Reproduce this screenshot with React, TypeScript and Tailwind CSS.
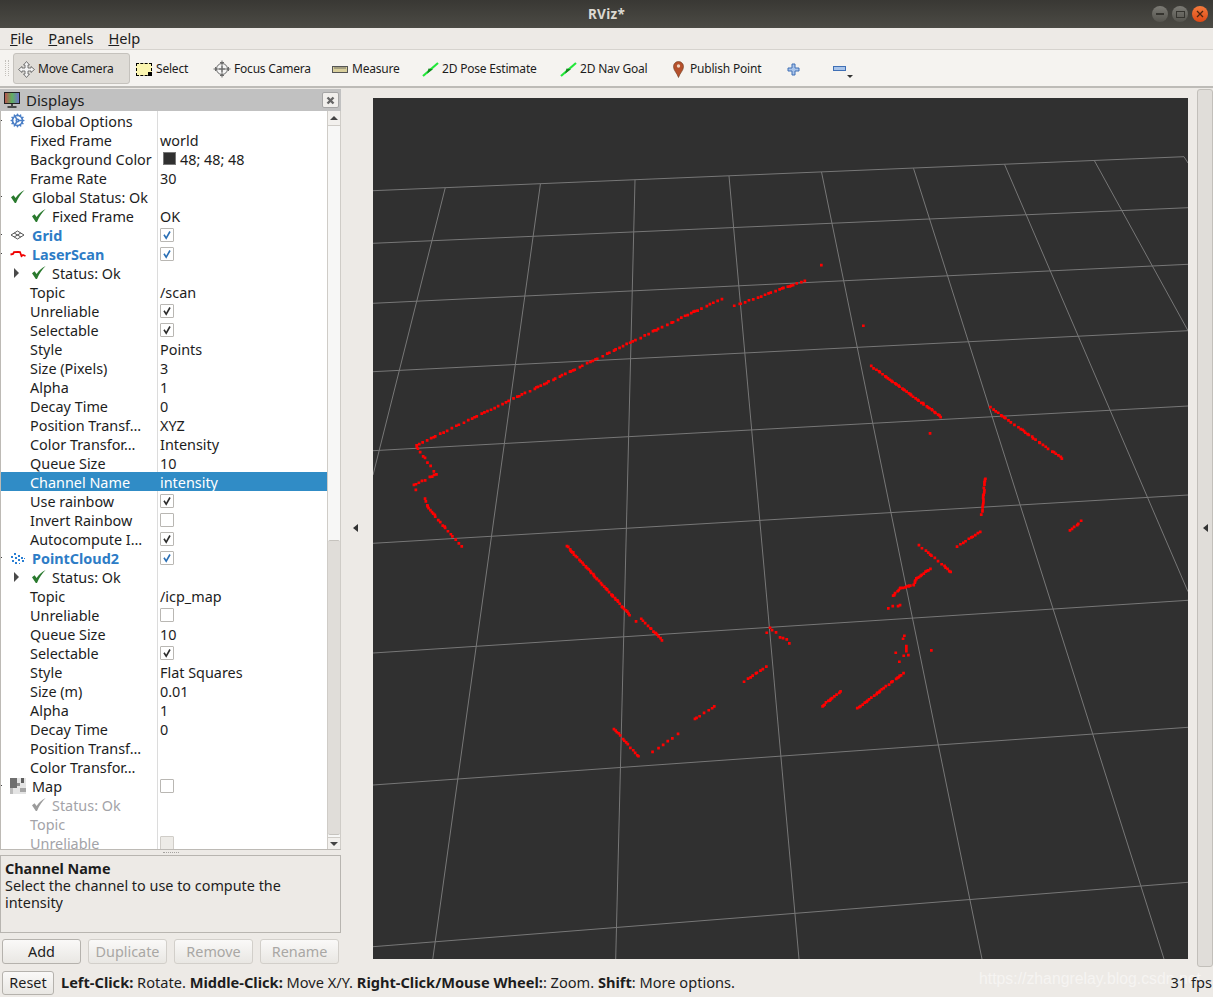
import React from 'react';
import { Cog } from 'lucide-react';

type Row = {
  label: string;
  value?: string;
  swatch?: boolean;
  check?: 'on' | 'off' | 'blue' | 'dim';
  icon?: 'gear' | 'ok' | 'grid' | 'laser' | 'cloud' | 'map';
  status?: boolean;
  arrow?: boolean;
  bold?: boolean;
  off?: boolean;
  selected?: boolean;
};

const rows: Row[] = [
  { label: 'Global Options', icon: 'gear' },
  { label: 'Fixed Frame', value: 'world' },
  { label: 'Background Color', value: '48; 48; 48', swatch: true },
  { label: 'Frame Rate', value: '30' },
  { label: 'Global Status: Ok', icon: 'ok' },
  { label: 'Fixed Frame', value: 'OK', status: true },
  { label: 'Grid', icon: 'grid', bold: true, check: 'blue' },
  { label: 'LaserScan', icon: 'laser', bold: true, check: 'blue' },
  { label: 'Status: Ok', status: true, arrow: true },
  { label: 'Topic', value: '/scan' },
  { label: 'Unreliable', check: 'on' },
  { label: 'Selectable', check: 'on' },
  { label: 'Style', value: 'Points' },
  { label: 'Size (Pixels)', value: '3' },
  { label: 'Alpha', value: '1' },
  { label: 'Decay Time', value: '0' },
  { label: 'Position Transf…', value: 'XYZ' },
  { label: 'Color Transfor…', value: 'Intensity' },
  { label: 'Queue Size', value: '10' },
  { label: 'Channel Name', value: 'intensity', selected: true },
  { label: 'Use rainbow', check: 'on' },
  { label: 'Invert Rainbow', check: 'off' },
  { label: 'Autocompute I…', check: 'on' },
  { label: 'PointCloud2', icon: 'cloud', bold: true, check: 'blue' },
  { label: 'Status: Ok', status: true, arrow: true },
  { label: 'Topic', value: '/icp_map' },
  { label: 'Unreliable', check: 'off' },
  { label: 'Queue Size', value: '10' },
  { label: 'Selectable', check: 'on' },
  { label: 'Style', value: 'Flat Squares' },
  { label: 'Size (m)', value: '0.01' },
  { label: 'Alpha', value: '1' },
  { label: 'Decay Time', value: '0' },
  { label: 'Position Transf…' },
  { label: 'Color Transfor…' },
  { label: 'Map', icon: 'map', check: 'off' },
  { label: 'Status: Ok', status: true, off: true },
  { label: 'Topic', off: true },
  { label: 'Unreliable', off: true, check: 'dim' },
];

// grid lines in page coordinates, read off the 3d view
const gridLines = [
  [373, 190.7, 1184, 156.7],
  [373, 243.3, 1188, 207.7],
  [373, 303.3, 1188, 264.3],
  [373, 371.7, 1188, 330.7],
  [373, 450.7, 1188, 406],
  [373, 543.3, 1188, 495],
  [373, 653, 1188, 600.3],
  [373, 785, 1188, 727.3],
  [373, 946.7, 1188, 882.3],
  [1184, 156.7, 1188, 163],
  [1094.4, 160.7, 1188, 330.7],
  [1004.5, 164.3, 1188, 591.7],
  [913.5, 168.3, 1164, 959],
  [821.5, 172, 982, 959],
  [729, 176, 799, 959],
  [635, 180, 615.7, 959],
  [540.4, 184, 432.8, 959],
  [445.2, 188, 373, 475],
];

// laser returns: polylines with a dot spacing
const scanLines: { pts: number[]; step: number }[] = [
  { pts: [417, 445, 725, 297], step: 3.6 },
  { pts: [734.3, 305.7, 806.7, 280], step: 3.4 },
  { pts: [416.7, 447.3, 436, 474, 414.3, 485.3, 416.7, 492.3], step: 4 },
  { pts: [425, 498.3, 427.3, 506.7, 461.7, 546.7], step: 3.2 },
  { pts: [871, 366, 943.3, 418.3], step: 2.4 },
  { pts: [990, 407.3, 1062.7, 458.7], step: 3 },
  { pts: [985, 478.7, 982.7, 506.7, 981, 516.7], step: 2 },
  { pts: [980, 531.7, 956.7, 546.7], step: 2.6 },
  { pts: [1070, 530.7, 1082.7, 520], step: 3.6 },
  { pts: [919.3, 545.3, 951.7, 572.7], step: 3.2 },
  { pts: [930, 568.7, 916.7, 578.3, 913.3, 585, 900, 588.3, 892.7, 596.7], step: 2 },
  { pts: [566.7, 546, 631.7, 616.7], step: 2 },
  { pts: [641, 618.7, 664, 641.7], step: 2.4 },
  { pts: [744, 681.3, 766.7, 666.3], step: 2.8 },
  { pts: [695, 719, 715.3, 706], step: 4 },
  { pts: [652.3, 752.3, 680.7, 732.3], step: 5.8 },
  { pts: [614, 728.7, 640.7, 759], step: 3 },
  { pts: [822.3, 706, 842, 690.3], step: 2.2 },
  { pts: [857.3, 708.3, 903.3, 673.3], step: 2.2 },
];

const scanDots = [
  [821.3, 265], [863.3, 325.7], [930, 433.3], [888.3, 608.3], [892.7, 606], [900, 605], [898, 606],
  [636, 621.3], [770, 627.7], [766.7, 632.7], [776, 632.3], [780, 637.3], [786.7, 639.3], [789.3, 643.3],
  [772, 630], [783, 638], [904.3, 635.7], [903, 638.7], [906.3, 646], [906.3, 648.5], [906.3, 651],
  [895.7, 652.7], [903.7, 655.7], [908.3, 655], [899.3, 661.7], [931.3, 650.3],
];

function buildScanPath() {
  let seed = 7;
  const rand = () => {
    seed = (seed * 16807) % 2147483647;
    return seed / 2147483647;
  };
  let d = '';
  const dot = (x: number, y: number) => {
    d += `M${x.toFixed(1)} ${y.toFixed(1)}h2.7v2.7h-2.7z`;
  };
  scanLines.forEach(({ pts, step }) => {
    for (let i = 0; i + 3 < pts.length; i += 2) {
      const dx = pts[i + 2] - pts[i];
      const dy = pts[i + 3] - pts[i + 1];
      const len = Math.hypot(dx, dy);
      for (let s = 0; s <= len; s += step * (0.4 + rand() * 1.2)) {
        dot(pts[i] + (dx * s) / len + (rand() - 0.5) * 0.9 - 1.3, pts[i + 1] + (dy * s) / len + (rand() - 0.5) * 0.9 - 1.3);
      }
    }
  });
  scanDots.forEach(([x, y]) => dot(x - 1.3, y - 1.3));
  return d;
}

const scanPath = buildScanPath();

const CheckMark = ({ color = '#2a7a2e' }: { color?: string }) => (
  <svg width="15" height="15" viewBox="0 0 15 15" className="shrink-0">
    <path d="M1 8.2 L3.6 6.2 L5.6 9 C7.6 6 10.2 3 14.6 1 C11 4.5 8.4 8.4 6 14 L4.8 14 Z" fill={color} />
  </svg>
);

const RowIcon = ({ icon }: { icon: Row['icon'] }) => {
  if (icon === 'gear') return <Cog size={15} strokeWidth={2.6} color="#4b7fc6" />;
  if (icon === 'ok') return <CheckMark />;
  if (icon === 'grid')
    return (
      <svg width="15" height="10" viewBox="0 0 15 10">
        <path d="M1 5 L7.5 1 L14 5 L7.5 9 Z M4.2 3 L10.8 7 M10.8 3 L4.2 7" fill="none" stroke="#555" strokeWidth="1" />
      </svg>
    );
  if (icon === 'laser')
    return (
      <svg width="16" height="10" viewBox="0 0 16 10">
        <path d="M0.5 5.5 L3 5 L4 3.2 L8 2.8 L10 3 L11.5 7 L13 6 L15.5 7" fill="none" stroke="#f00000" strokeWidth="1.8" />
      </svg>
    );
  if (icon === 'cloud')
    return (
      <svg width="16" height="16" viewBox="0 0 16 16" fill="#2a7fd4">
        <rect x="1" y="6" width="2" height="2" />
        <rect x="2" y="10" width="2" height="2" />
        <rect x="4" y="3" width="2" height="2" />
        <rect x="5" y="7" width="2" height="2" />
        <rect x="5" y="12" width="2" height="2" />
        <rect x="8" y="5" width="2" height="2" />
        <rect x="8" y="9" width="2" height="2" />
        <rect x="9" y="13" width="1" height="1" />
        <rect x="11" y="7" width="2" height="2" />
        <rect x="12" y="10" width="2" height="2" />
        <rect x="14" y="8" width="1" height="1" />
      </svg>
    );
  if (icon === 'map')
    return (
      <svg width="16" height="16" viewBox="0 0 16 16">
        <rect width="16" height="16" fill="#e4e4e4" />
        <rect width="7" height="10" fill="#6f6f6f" />
        <rect x="7" y="5" width="3" height="3" fill="#8d8d8d" />
        <rect x="11" width="3" height="5" fill="#5e5e5e" />
        <rect x="0" y="10" width="3" height="6" fill="#bcbcbc" />
        <rect x="10" y="10" width="6" height="4" fill="#a5a5a5" />
      </svg>
    );
  return null;
};

const CheckBox = ({ state }: { state: NonNullable<Row['check']> }) => (
  <span className={`flex h-[14px] w-[14px] items-center justify-center rounded-[1px] border ${state === 'dim' ? 'border-[#d0cdc8] bg-[#edebe7]' : 'border-[#b9b7b3] bg-white'}`}>
    {(state === 'on' || state === 'blue') && (
      <svg width="10" height="10" viewBox="0 0 10 10">
        <path d="M2 4.8 L4.2 8.2 L8 1.5" fill="none" stroke={state === 'blue' ? '#2a6fb5' : '#2c2c2c'} strokeWidth="1.6" />
      </svg>
    )}
  </span>
);

const TreeRow = ({ row }: { row: Row }) => {
  const textColor = row.selected ? 'text-white' : row.off ? 'text-[#a3a3a8]' : row.bold ? 'text-[#2d7cc6] font-bold' : 'text-[#1d1d1d]';
  return (
    <div className={`flex h-[19px] shrink-0 leading-[19px] ${row.selected ? 'bg-[#308cc6]' : ''}`}>
      <div className={`relative flex w-[157px] shrink-0 items-center border-r ${row.selected ? 'border-[#308cc6]' : 'border-[#dcdcdc]'} ${textColor}`}>
        {row.icon && (
          <>
            <span className="absolute left-0 top-[9px] h-px w-px bg-[#444]" />
            <span className="ml-[9px] flex w-[22px] shrink-0 items-center">
              <RowIcon icon={row.icon} />
            </span>
          </>
        )}
        {row.status && (
          <span className="ml-[12px] flex w-[39px] shrink-0 items-center">
            <span className="flex w-[18px] justify-start">
              {row.arrow && <span className="ml-[1px] h-0 w-0 border-y-[5px] border-l-[5px] border-y-transparent border-l-[#4a4a4a]" />}
            </span>
            <CheckMark color={row.off ? '#9c9c9c' : '#2a7a2e'} />
          </span>
        )}
        {!row.icon && !row.status && <span className="w-[29px] shrink-0" />}
        <span className="mt-[2px] whitespace-nowrap">{row.label}</span>
      </div>
      <div className={`flex flex-1 items-center pl-[2px] ${row.selected ? 'text-white' : 'text-[#1d1d1d]'}`}>
        {row.swatch && <span className="ml-[3px] mr-[4px] h-[13px] w-[13px] border border-[#777] bg-[#303030]" />}
        {row.value && <span className="mt-[2px]">{row.value}</span>}
        {row.check && <CheckBox state={row.check} />}
      </div>
    </div>
  );
};

const PoseArrow = () => (
  <svg width="17" height="15" viewBox="0 0 17 15">
    <path d="M1 14 L16 1" stroke="#22e83a" strokeWidth="2.2" />
    <path d="M5 11.8 L6.5 6.5 L11 7.2 Z" fill="#128a1e" />
  </svg>
);

const tools = [
  { label: 'Select', box: 'w-[77px] pl-[6px]', gap: 'w-[20px]', icon: (
    <span className="relative block h-[13px] w-[16px] border border-dashed border-black bg-[#fbf5b0]">
      <span className="absolute bottom-[-1px] right-[-1px] h-[4px] w-[4px] bg-black" />
    </span>
  ) },
  { label: 'Focus Camera', box: 'w-[125px] pl-[6px]', gap: 'w-[21px]', icon: (
    <svg width="18" height="18" viewBox="0 0 18 18" fill="none" stroke="#6a6a6a">
      <circle cx="9" cy="9" r="5.5" fill="#f4f4f4" />
      <path d="M9 0.5 V17.5 M0.5 9 H17.5 M6 9 H12 M9 6 V12" />
      <path d="M7 2.5 H11 M7 15.5 H11 M2.5 7 V11 M15.5 7 V11" />
    </svg>
  ) },
  { label: 'Measure', box: 'w-[90px] pl-[0px]', gap: 'w-[20px]', icon: (
    <svg width="16" height="7" viewBox="0 0 16 7">
      <rect x="0.5" y="0.5" width="15" height="6" fill="#d9cf9c" stroke="#555" />
      <path d="M3 1 V3 M5 1 V3 M7 1 V3 M9 1 V3 M11 1 V3 M13 1 V3" stroke="#555" strokeWidth="0.8" />
    </svg>
  ) },
  { label: '2D Pose Estimate', box: 'w-[138px] pl-[0px]', gap: 'w-[20px]', icon: <PoseArrow /> },
  { label: '2D Nav Goal', box: 'w-[113px] pl-[0px]', gap: 'w-[20px]', icon: <PoseArrow /> },
  { label: 'Publish Point', box: 'w-[114px] pl-[0px]', gap: 'w-[17px]', icon: (
    <svg width="11" height="17" viewBox="0 0 11 17">
      <path d="M5.5 16.5 C4 12 0.5 9.5 0.5 5.5 A5 5 0 0 1 10.5 5.5 C10.5 9.5 7 12 5.5 16.5 Z" fill="#b5502c" stroke="#6d3a20" strokeWidth="0.6" />
      <circle cx="5.5" cy="5" r="1.7" fill="#f0d4c0" />
    </svg>
  ) },
];

const PanelButton = ({ label, disabled }: { label: string; disabled?: boolean }) => (
  <button className={`h-[25px] w-[79px] rounded-[3px] border bg-gradient-to-b from-[#faf9f8] to-[#e9e7e3] text-[14.4px] ${disabled ? 'border-[#d2cfca] text-[#a9a7a4]' : 'border-[#b5b2ad] text-[#1d1d1d]'}`}>
    {label}
  </button>
);

const App: React.FC = () => {
  return (
    <div className="relative flex h-[997px] w-[1213px] flex-col overflow-hidden bg-[#edeae6] text-[14.4px] text-[#1d1d1d]" style={{ fontFamily: '"Noto Sans", sans-serif' }}>
      {/* Title bar */}
      <div className="relative flex h-[28px] shrink-0 items-center justify-center bg-gradient-to-b from-[#393834] to-[#4c4b45]">
        <span className="text-[13.5px] font-bold tracking-[0.3px] text-[#dcd9d2]">RViz*</span>
        <div className="absolute right-[5px] top-[6px] flex gap-[4px]">
          <span className="flex h-[16px] w-[16px] items-center justify-center rounded-full bg-gradient-to-b from-[#7c7b75] to-[#55544e]">
            <span className="h-[1.5px] w-[8px] bg-[#35342f]" />
          </span>
          <span className="flex h-[16px] w-[16px] items-center justify-center rounded-full bg-gradient-to-b from-[#7c7b75] to-[#55544e]">
            <span className="h-[7px] w-[9px] border border-[#35342f]" />
          </span>
          <span className="flex h-[16px] w-[16px] items-center justify-center rounded-full bg-gradient-to-b from-[#f47a3c] to-[#dd4814] text-[#4d2410]">
            <svg width="8" height="8" viewBox="0 0 8 8">
              <path d="M1 1 L7 7 M7 1 L1 7" stroke="currentColor" strokeWidth="1.3" />
            </svg>
          </span>
        </div>
      </div>

      {/* Menu bar */}
      <div className="flex h-[22px] shrink-0 items-center gap-[15px] border-b border-[#d6d3ce] pl-[10px] text-[14.6px]">
        <span><u>F</u>ile</span>
        <span><u>P</u>anels</span>
        <span><u>H</u>elp</span>
      </div>

      {/* Toolbar */}
      <div className="flex h-[38px] shrink-0 items-center border-b-2 border-[#bdbbb7] bg-[#f5f3f0] text-[12px] tracking-[-0.2px]">
        <span className="ml-[5px] h-[16px] w-[4px] border-x border-dotted border-[#c3c0bb]" />
        <div className="ml-[4px] flex h-[31px] w-[117px] items-center rounded-[3px] border border-[#c5c2bd] bg-[#dfdcd7] pl-[4px] pt-[2px]">
          <span className="flex w-[20px] justify-start">
            <svg width="17" height="17" viewBox="0 0 17 17">
              <path d="M8.5 0.5 L11.5 4 H10 V7 H13 V5.5 L16.5 8.5 L13 11.5 V10 H10 V13 H11.5 L8.5 16.5 L5.5 13 H7 V10 H4 V11.5 L0.5 8.5 L4 5.5 V7 H7 V4 H5.5 Z" fill="#f2f2f2" stroke="#666" strokeWidth="0.9" />
            </svg>
          </span>
          Move Camera
        </div>
        {tools.map(t => (
          <div key={t.label} className={`flex items-center pt-[2px] ${t.box}`}>
            <span className={`flex shrink-0 items-center ${t.gap}`}>{t.icon}</span>
            <span className="whitespace-nowrap">{t.label}</span>
          </div>
        ))}
        <span className="w-[46px] pt-[2px]">
          <svg width="13" height="13" viewBox="0 0 13 13" className="block">
            <path d="M5 1 H8 V5 H12 V8 H8 V12 H5 V8 H1 V5 H5 Z" fill="#a9c4ea" stroke="#3f6fb5" />
          </svg>
        </span>
        <span className="relative pt-[2px]">
          <svg width="13" height="6" viewBox="0 0 13 6" className="block">
            <rect x="0.5" y="0.5" width="12" height="4" fill="#a9c4ea" stroke="#3f6fb5" />
          </svg>
          <span className="absolute left-[14px] top-[11px] h-0 w-0 border-x-[3px] border-t-[3px] border-x-transparent border-t-[#333]" />
        </span>
      </div>

      {/* Main area */}
      <div className="flex h-[880px] shrink-0">
        <div className="flex w-[341px] shrink-0 flex-col pt-[1px]">
          <div className="flex h-[22px] shrink-0 items-center bg-[#c1c1c1] pl-[4px] pr-[2px] text-[15px]">
            <svg width="17" height="16" viewBox="0 0 17 16" className="mr-[5px] shrink-0">
              <defs>
                <linearGradient id="screen" x1="0" x2="1" y1="0" y2="0">
                  <stop offset="0" stopColor="#c05050" />
                  <stop offset="0.5" stopColor="#60b060" />
                  <stop offset="1" stopColor="#7070d0" />
                </linearGradient>
              </defs>
              <rect x="0.5" y="0.5" width="15" height="11" fill="url(#screen)" stroke="#222" />
              <path d="M8 12 V14 M3.5 15 H12.5" stroke="#222" strokeWidth="1.5" />
            </svg>
            Displays
            <span className="ml-auto flex h-[16px] w-[17px] items-center justify-center rounded-[2px] border border-[#a5a5a5] bg-[#f1efec]">
              <svg width="9" height="9" viewBox="0 0 9 9">
                <path d="M1.5 1.5 L7.5 7.5 M7.5 1.5 L1.5 7.5" stroke="#666" strokeWidth="2.4" />
              </svg>
            </span>
          </div>

          <div className="flex h-[739px] shrink-0 border-b border-l border-[#bdbab5] bg-white">
            <div className="flex h-[738px] w-[326px] shrink-0 flex-col overflow-hidden">
              {rows.map((r, i) => (
                <TreeRow key={i} row={r} />
              ))}
            </div>
            <div className="flex w-[14px] shrink-0 flex-col border-x border-[#cfccc7]">
              <div className="flex h-[15px] shrink-0 items-center justify-center border-b border-[#cfccc7] bg-[#f2f0ed]">
                <span className="h-0 w-0 border-x-[4px] border-b-[4px] border-x-transparent border-b-[#444]" />
              </div>
              <div className="h-[414px] shrink-0 bg-[#f7f7f6]" />
              <div className="h-[295px] shrink-0 rounded-[2px] border-y border-[#c6c3be] bg-[#e0ddd9]" />
              <div className="flex-1 bg-[#f7f7f6]" />
              <div className="flex h-[12px] shrink-0 items-center justify-center border-t border-[#cfccc7] bg-[#f2f0ed]">
                <span className="h-0 w-0 border-x-[4px] border-t-[4px] border-x-transparent border-t-[#444]" />
              </div>
            </div>
          </div>

          <div className="flex h-[5px] shrink-0 items-center justify-center">
            <span className="h-px w-[16px] border-t border-dotted border-[#a5a3a0]" />
          </div>

          <div className="h-[78px] shrink-0 border border-[#b8b5b0] px-[4px] pt-[4px] text-[14.4px] leading-[17px]">
            <div className="font-bold">Channel Name</div>
            <div>Select the channel to use to compute the intensity</div>
          </div>

          <div className="mt-[6px] flex gap-[7px] pl-[2px]">
            <PanelButton label="Add" />
            <PanelButton label="Duplicate" disabled />
            <PanelButton label="Remove" disabled />
            <PanelButton label="Rename" disabled />
          </div>
        </div>

        <div className="flex w-[32px] shrink-0 items-center pl-[12px]">
          <span className="h-0 w-0 border-y-[4px] border-r-[5px] border-y-transparent border-r-[#333]" />
        </div>

        <div className="mt-[10px] h-[861px] w-[815px] shrink-0 bg-[#303030]">
          <svg width="815" height="861" viewBox="373 98 815 861" className="block">
            {gridLines.map((l, i) => (
              <line key={i} x1={l[0]} y1={l[1]} x2={l[2]} y2={l[3]} stroke="#777777" strokeWidth="1" />
            ))}
            <path d={scanPath} fill="#ff0000" />
          </svg>
        </div>

        <div className="ml-[9px] mt-[1px] flex h-[878px] w-[16px] shrink-0 items-center justify-center rounded-[3px] border border-[#c2bfba] bg-[#e0ddd9]">
          <span className="h-0 w-0 border-y-[4px] border-r-[5px] border-y-transparent border-r-[#333]" />
        </div>
      </div>

      {/* Status bar */}
      <div className="relative flex flex-1 items-center pl-[2px] pt-[1px] text-[14.6px]">
        <button className="h-[24px] w-[52px] rounded-[3px] border border-[#b5b2ad] bg-gradient-to-b from-[#faf9f8] to-[#e9e7e3] text-[14.4px]">Reset</button>
        <span className="ml-[7px] whitespace-nowrap">
          <b>Left-Click:</b> Rotate. <b>Middle-Click:</b> Move X/Y. <b>Right-Click/Mouse Wheel:</b>: Zoom. <b>Shift</b>: More options.
        </span>
        <span className="absolute left-[979px] top-[-1px] whitespace-nowrap text-[15.8px] text-white/50" style={{ fontFamily: '"Liberation Sans", sans-serif' }}>
          https://zhangrelay.blog.csdn.net
        </span>
        <span className="relative ml-auto pr-[1px]">31 fps</span>
      </div>
    </div>
  );
};

export default App;
